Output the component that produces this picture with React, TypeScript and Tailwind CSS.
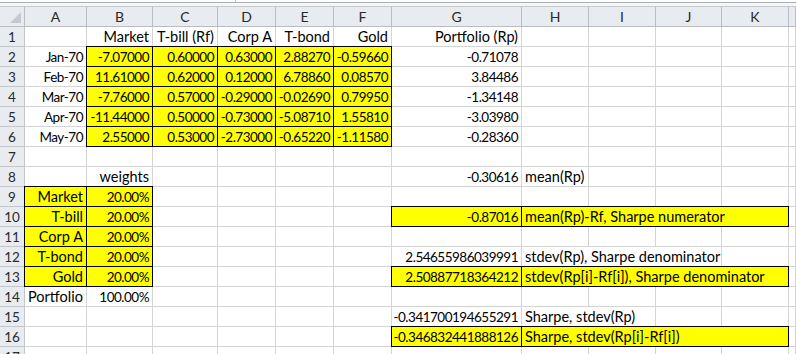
import React from "react";
import clsx from "clsx";

type C = { t?: string; a?: "l" | "r"; y?: boolean; box?: boolean; span?: number };

const COLS =
  "grid grid-cols-[25px_62px_66px_65px_58px_58px_58px_130px_67px_67px_66px_67px_1fr]";

const e = (n: number): C[] => Array.from({ length: n }, () => ({}));
const yb = (t: string): C => ({ t, a: "r", y: true, box: true });
const r = (t: string): C => ({ t, a: "r" });
const l = (t: string): C => ({ t, a: "l" });

const data: [string, string, string, string, string, string, string][] = [
  ["Jan-70", "-7.07000", "0.60000", "0.63000", "2.88270", "-0.59660", "-0.71078"],
  ["Feb-70", "11.61000", "0.62000", "0.12000", "6.78860", "0.08570", "3.84486"],
  ["Mar-70", "-7.76000", "0.57000", "-0.29000", "-0.02690", "0.79950", "-1.34148"],
  ["Apr-70", "-11.44000", "0.50000", "-0.73000", "-5.08710", "1.55810", "-3.03980"],
  ["May-70", "2.55000", "0.53000", "-2.73000", "-0.65220", "-1.11580", "-0.28360"],
];

const rows: C[][] = [
  [{}, r("Market"), r("T-bill (Rf)"), r("Corp A"), r("T-bond"), r("Gold"), r("Portfolio (Rp)"), ...e(5)],
  ...data.map((d) => [r(d[0]), yb(d[1]), yb(d[2]), yb(d[3]), yb(d[4]), yb(d[5]), r(d[6]), ...e(5)]),
  e(12),
  [{}, r("weights"), ...e(4), r("-0.30616"), l("mean(Rp)"), ...e(4)],
  [yb("Market"), yb("20.00%"), ...e(10)],
  [
    yb("T-bill"),
    yb("20.00%"),
    ...e(4),
    yb("-0.87016"),
    { t: "mean(Rp)-Rf, Sharpe numerator", a: "l", y: true, box: true, span: 4 },
    {},
  ],
  [yb("Corp A"), yb("20.00%"), ...e(10)],
  [
    yb("T-bond"),
    yb("20.00%"),
    ...e(4),
    r("2.54655986039991"),
    { t: "stdev(Rp), Sharpe denominator", a: "l", span: 3 },
    {},
    {},
  ],
  [
    yb("Gold"),
    yb("20.00%"),
    ...e(4),
    yb("2.50887718364212"),
    { t: "stdev(Rp[i]-Rf[i]), Sharpe denominator", a: "l", y: true, box: true, span: 4 },
    {},
  ],
  [l("Portfolio"), r("100.00%"), ...e(10)],
  [...e(6), r("-0.341700194655291"), { t: "Sharpe, stdev(Rp)", a: "l", span: 2 }, {}, {}, {}],
  [
    ...e(6),
    yb("-0.346832441888126"),
    { t: "Sharpe, stdev(Rp[i]-Rf[i])", a: "l", y: true, box: true, span: 4 },
    {},
  ],
  e(12),
];

const isNum = (t?: string) => !!t && (/^-?[\d.]+%?$/.test(t) || /^[A-Z][a-z]{2}-70$/.test(t));

function Cell({ c }: { c: C }) {
  const span =
    c.span === 2 ? "col-span-2" : c.span === 3 ? "col-span-3" : c.span === 4 ? "col-span-4" : "";
  const num = isNum(c.t);
  return (
    <div
      className={clsx(
        "relative h-[20px] border-r border-b border-[#d4d4d4] whitespace-nowrap leading-[20px]",
        span,
        num ? "text-[13.5px] tracking-[-0.5px]" : "text-[14.5px]",
        c.y && "bg-[#ffff00]",
        c.a === "r" ? "text-right pr-[3px]" : "text-left pl-[3px]"
      )}
    >
      {c.t}
      {c.box && (
        <span className="pointer-events-none absolute -top-px -left-px -right-px -bottom-px border border-black" />
      )}
    </div>
  );
}

const letters = ["A", "B", "C", "D", "E", "F", "G", "H", "I", "J", "K", ""];

export default function App() {
  return (
    <div className="w-[796px] h-[354px] overflow-hidden bg-white text-black text-[14.5px] font-['Lato',sans-serif]">
      <div className="h-[2px] flex">
        <div className="w-[236px] border-r border-[#c4c8cc]" />
      </div>
      <div className="h-px bg-[#a9aeb4]" />
      <div className="h-[3px] bg-[#f5f6f8]" />
      <div className="h-px bg-[#c3c7cc]" />
      <div className={clsx(COLS, "bg-[#e8ebef] text-[#2a2a2a]")}>
        <div className="h-[20px] border-r border-b border-[#b9bdc2] relative">
          <svg className="absolute left-0 top-0" width="24" height="19" viewBox="0 0 24 19">
            <polygon points="21,5 21,16 10,16" fill="#c5cad0" />
          </svg>
        </div>
        {letters.map((L, i) => (
          <div
            key={i}
            className="h-[20px] border-r border-b border-[#b9bdc2] text-center text-[14px] leading-[19px]"
          >
            {L}
          </div>
        ))}
      </div>
      {rows.map((row, ri) => (
        <div key={ri} className={COLS}>
          <div className="h-[20px] border-r border-b border-[#c3c7cc] bg-[#e8ebef] text-[#2a2a2a] text-center text-[13.5px] leading-[20px]">
            {ri + 1}
          </div>
          {row.map((c, ci) => (
            <Cell key={ci} c={c} />
          ))}
        </div>
      ))}
    </div>
  );
}
